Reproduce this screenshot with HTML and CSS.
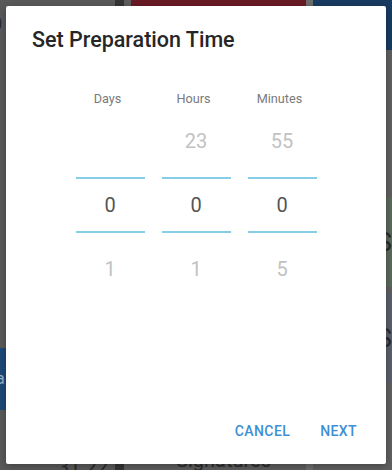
FILE: index.html
```html
<!DOCTYPE html>
<html lang="en">
<head>
  <meta charset="UTF-8">
  <meta name="viewport" content="width=device-width, initial-scale=1.0">
  <title>Set Preparation Time</title>
  <link rel="stylesheet" href="styles.css">
</head>
<body>
    <!-- app behind the dialog, dimmed -->
    <div class="backdrop">
        <div class="bg-col bg-left">
            <div class="bg-glyph">0</div>
            <div class="bg-left-fill"></div>
            <div class="bg-blue-tab">a</div>
            <div class="bg-left-rest"></div>
            <div class="bg-price">31.22</div>
        </div>
        <div class="bg-col bg-dark"></div>
        <div class="bg-col bg-gap"></div>
        <div class="bg-col bg-middle">
            <div class="bg-red"></div>
            <div class="bg-sign">Signatures</div>
        </div>
        <div class="bg-col bg-gap light"></div>
        <div class="bg-col bg-right">
            <div class="bg-navy"></div>
            <div class="bg-grey"></div>
            <div class="bg-green">S</div>
            <div class="bg-slate">S</div>
            <div class="bg-grey"></div>
        </div>
    </div>

    <div class="dialog">
        <h1 class="dialog-title">Set Preparation Time</h1>

        <div class="picker">
            <div class="picker-col">
                <div class="picker-label">Days</div>
                <div class="picker-item"></div>
                <div class="picker-item selected">0</div>
                <div class="picker-item">1</div>
            </div>
            <div class="picker-col">
                <div class="picker-label">Hours</div>
                <div class="picker-item">23</div>
                <div class="picker-item selected">0</div>
                <div class="picker-item">1</div>
            </div>
            <div class="picker-col">
                <div class="picker-label">Minutes</div>
                <div class="picker-item">55</div>
                <div class="picker-item selected">0</div>
                <div class="picker-item">5</div>
            </div>
        </div>

        <div class="dialog-actions">
            <button class="action">CANCEL</button>
            <button class="action">NEXT</button>
        </div>
    </div>
</body>
</html>
```

FILE: styles.css
```css
body {
    margin: 0;
    width: 392px;
    height: 470px;
    overflow: hidden;
    font-family: Roboto, "Noto Sans", Arial, sans-serif;
    background-color: #585858;
    position: relative;
}

/* Fondo de la app, ya oscurecido por el overlay */
.backdrop {
    display: flex;
    height: 470px;
}

.bg-col {
    display: flex;
    flex-direction: column;
}

.bg-left {
    width: 118px;
    background-color: #5a5a5a;
}

.bg-glyph {
    height: 36px;
    padding-top: 14px;
    color: #2a2a2a;
    font-size: 18px;
    line-height: 20px;
    margin-left: -8px;
}

.bg-left-fill {
    height: 298px;
}

.bg-blue-tab {
    height: 62px;
    width: 6px;
    background-color: #1d4a78;
    color: #9bb3cc;
    font-size: 16px;
    line-height: 62px;
    overflow: hidden;
    text-indent: -4px;
}

.bg-left-rest {
    flex: 1;
}

.bg-price {
    height: 14px;
    padding-left: 58px;
    color: #2b2b2b;
    font-size: 20px;
    line-height: 22px;
    overflow: hidden;
}

.bg-dark {
    width: 10px;
    background-color: #353535;
}

.bg-gap {
    width: 7px;
    background-color: #5e5e5e;
}

.bg-gap.light {
    background-color: #6e6e6e;
}

.bg-middle {
    width: 180px;
    background-color: #5e5e5e;
}

.bg-red {
    flex: 1;
    background-color: #6a1b25;
}

.bg-sign {
    height: 16px;
    padding-left: 45px;
    color: #2b2b2b;
    font-size: 20px;
    line-height: 12px;
    overflow: hidden;
    background-color: #5e5e5e;
}

.bg-right {
    flex: 1;
    background-color: #606060;
}

.bg-navy {
    height: 50px;
    background-color: #183b63;
}

.bg-grey {
    flex: 1;
}

.bg-green,
.bg-slate {
    height: 90px;
    padding-left: 64px;
    color: #2a2a2a;
    font-size: 26px;
    line-height: 90px;
    overflow: hidden;
}

.bg-green {
    background-color: #5a6a5c;
    margin-top: 60px;
}

.bg-slate {
    background-color: #5a606c;
    margin-top: 6px;
}

/* Dialogo */
.dialog {
    position: absolute;
    top: 6px;
    left: 6px;
    width: 380px;
    height: 458px;
    box-sizing: border-box;
    padding-top: 22px;
    background-color: #fff;
    border-radius: 2px;
    box-shadow: 0 2px 8px rgba(0, 0, 0, 0.3);
    display: flex;
    flex-direction: column;
}

.dialog-title {
    margin: 0 0 39px 26px;
    font-size: 21.5px;
    line-height: 24px;
    font-weight: 500;
    color: #262626;
}

.picker {
    display: flex;
    justify-content: center;
    gap: 17px;
}

.picker-col {
    width: 69px;
    display: flex;
    flex-direction: column;
    align-items: stretch;
}

.picker-label {
    height: 16px;
    margin-bottom: 2px;
    padding-right: 5px;
    font-size: 12.7px;
    line-height: 16px;
    color: #7a7a7a;
    text-align: center;
}

.picker-item {
    height: 64px;
    font-size: 20px;
    line-height: 64px;
    color: #c2c2c2;
    text-align: center;
}

.picker-item.selected {
    height: 52px;
    margin: 4px 0;
    line-height: 52px;
    color: #555;
    border-top: 2px solid #86cde6;
    border-bottom: 2px solid #86cde6;
}

.dialog-actions {
    margin-top: auto;
    display: flex;
    justify-content: flex-end;
    gap: 30px;
    padding: 0 29px 23px 0;
}

.action {
    padding: 0;
    border: none;
    background: none;
    font-family: Roboto, "Noto Sans", Arial, sans-serif;
    font-size: 14px;
    font-weight: 500;
    line-height: 20px;
    letter-spacing: 0.4px;
    color: #3d8fd6;
    cursor: pointer;
}
```
